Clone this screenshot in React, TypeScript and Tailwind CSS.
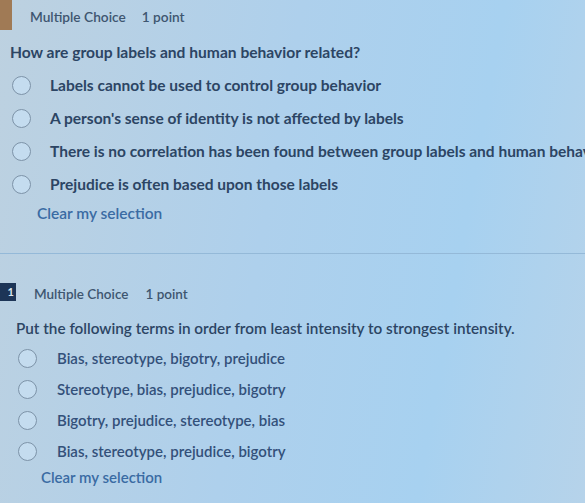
import React from "react";

type Question = {
  num: string;
  prompt: string;
  options: string[];
};

const questions: Question[] = [
  {
    num: "",
    prompt: "How are group labels and human behavior related?",
    options: [
      "Labels cannot be used to control group behavior",
      "A person's sense of identity is not affected by labels",
      "There is no correlation has been found between group labels and human behavior",
      "Prejudice is often based upon those labels",
    ],
  },
  {
    num: "1",
    prompt: "Put the following terms in order from least intensity to strongest intensity.",
    options: [
      "Bias, stereotype, bigotry, prejudice",
      "Stereotype, bias, prejudice, bigotry",
      "Bigotry, prejudice, stereotype, bias",
      "Bias, stereotype, prejudice, bigotry",
    ],
  },
];

function Radio() {
  return <span className="block h-[19px] w-[19px] shrink-0 rounded-full border-[1.5px] border-[#7d93a8] bg-[#c4dcef]" />;
}

export default function App() {
  const [first, second] = questions;
  return (
    <div
      className="h-[503px] w-[585px] overflow-hidden bg-[linear-gradient(100deg,#bdd1e0_0%,#aed0ec_45%,#a7d1f0_75%,#b6d3ea_100%)] text-[#2c4564]"
      style={{ fontFamily: "Lato, 'Open Sans', sans-serif" }}
    >
      {/* first question */}
      <section className="relative pb-[28px]">
        <div className="absolute left-0 top-0 h-[30px] w-[12px] bg-[#a07a55]" />
        <div className="flex gap-[16px] pl-[30px] pt-[7px] text-[13.7px] font-semibold text-[#3e5670]">
          <span>Multiple Choice</span>
          <span>1 point</span>
        </div>
        <p className="mt-[13px] whitespace-nowrap pl-[10px] text-[15.6px] font-bold">{first.prompt}</p>
        <ul className="mt-[12px] flex flex-col gap-[13px] pl-[12px]">
          {first.options.map((o) => (
            <li key={o} className="flex h-[20px] items-center gap-[19px] whitespace-nowrap text-[15.5px] font-bold">
              <Radio />
              <span>{o}</span>
            </li>
          ))}
        </ul>
        <button className="mt-[7px] pl-[37px] text-[15.5px] font-semibold text-[#3a6ba3]">Clear my selection</button>
      </section>

      <hr className="border-0 border-t border-[#94b9d8]" />

      {/* second question */}
      <section className="relative">
        <div className="absolute left-0 top-[29px] flex h-[18px] w-[16px] items-center justify-end bg-[#1d3557] pr-[2px] text-[11px] font-bold text-[#dbe7f2]">
          {second.num}
        </div>
        <div className="flex gap-[17px] pl-[34px] pt-[30px] text-[13.5px] font-semibold text-[#3e5670]">
          <span>Multiple Choice</span>
          <span>1 point</span>
        </div>
        <p className="mt-[13px] whitespace-nowrap pl-[16px] text-[15.3px] font-semibold">{second.prompt}</p>
        <ul className="mt-[8px] flex flex-col gap-[11px] pl-[18px]">
          {second.options.map((o) => (
            <li key={o} className="flex h-[20px] items-center gap-[20px] whitespace-nowrap text-[15px] font-semibold text-[#33507a]">
              <Radio />
              <span>{o}</span>
            </li>
          ))}
        </ul>
        <button className="mt-[5px] pl-[41px] text-[15px] font-semibold text-[#3a6ba3]">Clear my selection</button>
      </section>
    </div>
  );
}
